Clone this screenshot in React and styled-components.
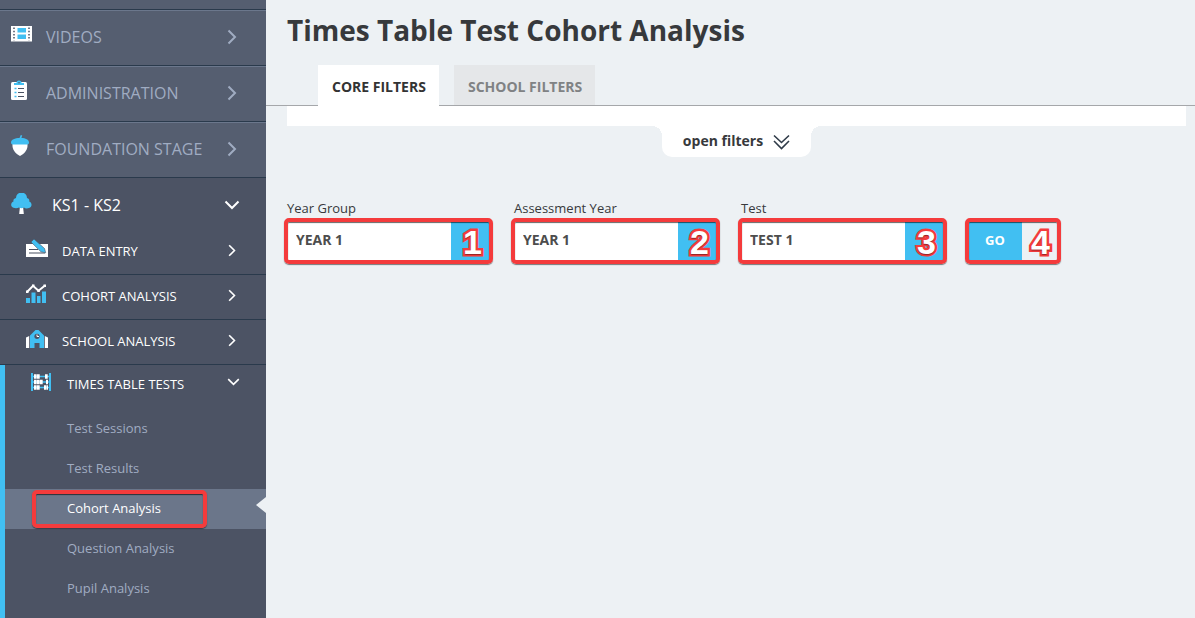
import React from 'react';
import styled, { createGlobalStyle, css } from 'styled-components';

const blue = '#41bff2';
const red = '#f43b3c';

const App = () => {
  return (
    <Page>
      <GlobalStyle />
      <Sidebar aria-label='Main'>
        <TopEdge />
        <MainLink href='#videos'>
          <Icon><VideoIcon /></Icon>
          VIDEOS
          <Chevron />
        </MainLink>
        <MainLink href='#administration'>
          <Icon><ClipboardIcon /></Icon>
          ADMINISTRATION
          <Chevron />
        </MainLink>
        <MainLink href='#foundation'>
          <Icon><AcornIcon /></Icon>
          FOUNDATION STAGE
          <Chevron />
        </MainLink>

        <Section>
          <SectionLink href='#ks'>
            <Icon><TreeIcon /></Icon>
            KS1 - KS2
            <Chevron open />
          </SectionLink>
          <SubLink href='#data-entry'>
            <Icon><DataEntryIcon /></Icon>
            DATA ENTRY
            <Chevron small />
          </SubLink>
          <SubLink href='#cohort'>
            <Icon><ChartIcon /></Icon>
            COHORT ANALYSIS
            <Chevron small />
          </SubLink>
          <SubLink href='#school'>
            <Icon><SchoolIcon /></Icon>
            SCHOOL ANALYSIS
            <Chevron small />
          </SubLink>
          <OpenGroup>
            <SubLink href='#times-table' $last>
              <Icon><AbacusIcon /></Icon>
              TIMES TABLE TESTS
              <Chevron open small />
            </SubLink>
            <PageLink href='#sessions'>Test Sessions</PageLink>
            <PageLink href='#results'>Test Results</PageLink>
            <PageLink href='#cohort-analysis' $active aria-current='page'>
              Cohort Analysis
              <LinkMark />
            </PageLink>
            <PageLink href='#question-analysis'>Question Analysis</PageLink>
            <PageLink href='#pupil-analysis'>Pupil Analysis</PageLink>
          </OpenGroup>
        </Section>
      </Sidebar>

      <Main>
        <Title>Times Table Test Cohort Analysis</Title>
        <Tabs role='tablist'>
          <Tab role='tab' aria-selected='true' $active>CORE FILTERS</Tab>
          <Tab role='tab' aria-selected='false'>SCHOOL FILTERS</Tab>
        </Tabs>
        <FilterPanel>
          <OpenFilters>
            open filters
            <svg width='17' height='16' viewBox='0 0 17 16' fill='none' stroke='#2f3b48' strokeWidth='1.600'>
              <path d='M1 1.500l7.500 7 7.500-7M1 7l7.500 7.500L16 7' />
            </svg>
          </OpenFilters>
        </FilterPanel>

        <Form onSubmit={(e) => e.preventDefault()}>
          <Field>
            <Label htmlFor='year-group'>Year Group</Label>
            <SelectBox>
              <Select id='year-group'>
                <option>YEAR 1</option>
              </Select>
              <SelectEnd />
              <Mark>1</Mark>
            </SelectBox>
          </Field>
          <Field>
            <Label htmlFor='assessment-year'>Assessment Year</Label>
            <SelectBox>
              <Select id='assessment-year'>
                <option>YEAR 1</option>
              </Select>
              <SelectEnd />
              <Mark>2</Mark>
            </SelectBox>
          </Field>
          <Field>
            <Label htmlFor='test'>Test</Label>
            <SelectBox>
              <Select id='test'>
                <option>TEST 1</option>
              </Select>
              <SelectEnd />
              <Mark>3</Mark>
            </SelectBox>
          </Field>
          <GoBox>
            <GoButton type='submit'>GO</GoButton>
            <Mark>4</Mark>
          </GoBox>
        </Form>
      </Main>
    </Page>
  );
};

// Icons
const Chevron = ({ open, small }) => {
  if (open) {
    return (
      <ChevronSvg width={small ? 13 : 16} height='10' viewBox='0 0 16 10' $lift={small}>
        <path d='M1.500 1.500L8 8l6.500-6.500' />
      </ChevronSvg>
    );
  }
  return (
    <ChevronSvg width='10' height={small ? 13 : 16} viewBox='0 0 10 16'>
      <path d='M1.500 1.500L8 8l-6.500 6.500' />
    </ChevronSvg>
  );
};

const VideoIcon = () => (
  <svg width='22' height='16' viewBox='0 0 22 16'>
    <path fill='#fff' d='M0 0h21v15.500H0z' />
    <path fill={blue} d='M6.500 2H15v4.500H6.500zM6.500 8.500H15V13H6.500z' />
    <path stroke='#4a5263' strokeWidth='1.500' strokeDasharray='1.500 1.700' d='M3 1.500v13M18 1.500v13' />
  </svg>
);

const ClipboardIcon = () => (
  <svg width='17' height='20' viewBox='0 0 17 20'>
    <rect y='2' width='16' height='18' rx='1.500' fill='#fff' />
    <path fill={blue} d='M3 5V3h2.500a2.500 2.500 0 015 0H13v2z' />
    <circle cx='8' cy='2.700' r='.8' fill='#555e70' />
    <path stroke={blue} strokeWidth='1.500' d='M3.500 8.500h2M3.500 12.500h2M3.500 16.500h2' />
    <path stroke='#4a5263' strokeWidth='1.200' d='M7 8.500h6M7 12.500h6M7 16.500h6' />
  </svg>
);

const AcornIcon = () => (
  <svg width='18' height='21' viewBox='0 0 18 21'>
    <path fill='#fff' d='M1.500 9h15c.5 6-3 9.500-7.500 12C4.500 18.500 1 15 1.500 9z' />
    <path fill={blue} d='M8.500 3L9.800 0l1.400.6L10.400 3c4 0 7.600 1.500 7.600 4.500C18 9 17 9.500 16 9.500H2C1 9.500 0 9 0 7.500 0 4.500 4 3 8.500 3z' />
  </svg>
);

const TreeIcon = () => (
  <svg width='21' height='21' viewBox='0 0 21 21'>
    <path fill='#fff' d='M9 13h3l.8 8H8.200z' />
    <path fill={blue} d='M5 5a5.500 5.500 0 0111 0c2 .5 2.700 2 2.200 3.500 3 1 3.300 5.500-.2 6.500-2 .8-4 .5-5-.5-1.500 1-3.500 1-5 0-1.500 1-4 1-5.500.3C-.8 13.500-.4 9.500 2.500 8.500 2 7 3 5.500 5 5z' />
  </svg>
);

const DataEntryIcon = () => (
  <svg width='22' height='19' viewBox='0 0 22 19'>
    <path fill='#fff' d='M0 5h22v13H0z' />
    <path stroke='#4a5263' strokeWidth='1.200' d='M3 10.500h9M3 14h16' />
    <path fill={blue} stroke='#4a5263' strokeWidth='.6' d='M5 3l3-3 10.500 9.500 1.200 4.300-4.700-1z' />
  </svg>
);

const ChartIcon = () => (
  <svg width='20' height='19' viewBox='0 0 20 19'>
    <path fill={blue} d='M0 14h4v5H0zM5.500 8.500h4V19h-4zM11 12h3.500v7H11zM16 7.500h4V19h-4z' />
    <path fill='none' stroke='#fff' strokeWidth='2' d='M1 8L7 1.800l5.500 5L19 1.500' />
    <path fill='#fff' d='M0 6.500h2.500v2.500H0zM6 .5h2.500v2.500H6zM11.300 5.500h2.500V8h-2.500zM17.500.5H20V3h-2.500z' />
  </svg>
);

const SchoolIcon = () => (
  <svg width='22' height='18' viewBox='0 0 22 18'>
    <path fill='#fff' d='M0 7.500L3.200 6v12H0zM18.800 6L22 7.500V18h-3.200z' />
    <path fill={blue} d='M4 18V5.500L9.500 0h3L18 5.500V18h-4.500v-5h-5v5z' />
    <circle cx='11' cy='6.300' r='2.600' fill='#4c5364' />
    <path fill='none' stroke='#fff' d='M11 4.500v2h2' />
  </svg>
);

const AbacusIcon = () => (
  <svg width='20' height='18' viewBox='0 0 20 18'>
    <path stroke={blue} strokeWidth='1.400' d='M2 3.500h16M2 9h16M2 14.500h16' />
    <path fill={blue} d='M0 0h2v18H0zM18 0h2v18h-2z' />
    <path stroke='#fff' strokeWidth='4.500' strokeDasharray='2.700 .3' d='M3 3.500h6M14 3.500h3M3 9h9M15 9h2M3 14.500h6M13 14.500h4' />
  </svg>
);

// Styled components
const GlobalStyle = createGlobalStyle`
  * {
    box-sizing: border-box;
  }
  body {
    margin: 0;
    background: #edf1f4;
    font-family: 'Open Sans', 'Noto Sans', sans-serif;
    color: #37393c;
  }
`;

const Page = styled.div`
  display: flex;
  min-height: 100vh;
`;

const Sidebar = styled.nav`
  display: flex;
  flex-direction: column;
  flex: 0 0 266px;
  background: #555e70;
`;

const TopEdge = styled.div`
  height: 9px;
`;

const rowLink = css`
  display: flex;
  align-items: center;
  padding-right: 28px;
  text-decoration: none;
`;

const Icon = styled.span`
  display: flex;
  width: 36px;
  padding-bottom: 4px;
`;

const MainLink = styled.a`
  ${rowLink}
  height: 56px;
  padding-left: 11px;
  padding-bottom: 2px;
  border-top: 1px solid #2a3a4c;
  box-shadow: inset 0 1px #6b778c;
  font-size: 16px;
  color: #a0acc2;
  ${Icon} {
    width: 35px;
    padding-bottom: 6px;
  }
`;

const ChevronSvg = styled.svg`
  margin-left: auto;
  margin-right: ${(props) => (props.height === '10' ? '-2px' : '1px')};
  margin-bottom: ${(props) => (props.$lift ? '4px' : '0')};
  fill: none;
  stroke: currentColor;
  stroke-width: 2;
`;

const Section = styled.div`
  flex: 1;
  display: flex;
  flex-direction: column;
  background: #4c5364;
  border-top: 1px solid #2a3a4c;
`;

const SectionLink = styled.a`
  ${rowLink}
  height: 52px;
  padding-left: 11px;
  padding-top: 2px;
  font-size: 16px;
  color: #fff;
  ${Icon} {
    width: 41px;
  }
`;

const SubLink = styled.a`
  ${rowLink}
  height: ${(props) => (props.$last ? '44px' : '45px')};
  padding-left: 26px;
  padding-bottom: ${(props) => (props.$last ? '6px' : '3px')};
  border-bottom: ${(props) => (props.$last ? 'none' : '1px solid #2a3a4c')};
  font-size: 13px;
  color: #fff;
`;

const OpenGroup = styled.div`
  flex: 1;
  border-left: 5px solid ${blue};
`;

const PageLink = styled.a`
  position: relative;
  display: flex;
  align-items: center;
  height: 40px;
  padding-left: 62px;
  padding-bottom: 2px;
  font-size: 13px;
  text-decoration: none;
  color: ${(props) => (props.$active ? '#fff' : '#a0acc2')};
  background: ${(props) => (props.$active ? '#6b768a' : 'none')};
  &::after {
    content: '';
    display: ${(props) => (props.$active ? 'block' : 'none')};
    margin-left: auto;
    border: solid transparent;
    border-width: 8px 10px 8px 0;
    border-right-color: #edf1f4;
    margin-bottom: 6px;
  }
`;

const Main = styled.main`
  flex: 1;
  min-width: 0;
`;

const Title = styled.h1`
  margin: 0;
  padding: 10px 21px 15px;
  font-size: 28px;
  line-height: 40px;
  font-weight: 700;
`;

const Tabs = styled.div`
  display: flex;
  gap: 15px;
  padding-left: 52px;
  border-bottom: 1px solid #a5a7aa;
`;

const Tab = styled.button`
  height: ${(props) => (props.$active ? '41px' : '40px')};
  margin-bottom: ${(props) => (props.$active ? '-1px' : '0')};
  padding: 2px 13px 0 14px;
  border: none;
  background: ${(props) => (props.$active ? '#fff' : '#e5e7e9')};
  color: ${(props) => (props.$active ? '#333' : '#808284')};
  font: 700 14px 'Open Sans', sans-serif;
`;

const FilterPanel = styled.div`
  display: flex;
  justify-content: center;
  height: 20px;
  margin: 0 9px 0 21px;
  padding-top: 20px;
  background: #fff;
`;

const OpenFilters = styled.button`
  display: flex;
  flex-shrink: 0;
  align-items: center;
  gap: 10px;
  height: 31px;
  padding: 0 21px 2px;
  border: none;
  border-radius: 0 0 10px 10px;
  background: #fff;
  color: #37393c;
  font: 700 14px 'Open Sans', sans-serif;
  svg {
    margin-top: 2px;
  }
  /* curved shoulders either side of the tab */
  &::before,
  &::after {
    content: '';
    width: 10px;
    height: 10px;
    align-self: flex-start;
    background: radial-gradient(circle at 0 100%, transparent 10px, #fff 10px);
  }
  &::before {
    margin-left: -31px;
    margin-right: 11px;
  }
  &::after {
    margin-right: -31px;
    margin-left: 11px;
    background: radial-gradient(circle at 100% 100%, transparent 10px, #fff 10px);
  }
`;

const Form = styled.form`
  display: flex;
  flex-wrap: wrap;
  align-items: flex-end;
  gap: 24px;
  padding: 72px 21px 0;
`;

const Field = styled.div`
  width: 203px;
`;

const Label = styled.label`
  display: block;
  margin-bottom: 3px;
  font-size: 13px;
  line-height: 20px;
`;

const SelectBox = styled.div`
  position: relative;
  display: flex;
  height: 40px;
`;

const Select = styled.select`
  flex: 1;
  min-width: 0;
  padding: 0 9px 3px;
  appearance: none;
  border: none;
  border-radius: 0;
  background: #fff;
  color: #4d4d4d;
  font: 700 14px 'Open Sans', sans-serif;
`;

const SelectEnd = styled.span`
  width: 39px;
  background: ${blue};
`;

const GoBox = styled.div`
  position: relative;
  width: 90px;
  height: 40px;
`;

const GoButton = styled.button`
  width: 54px;
  height: 40px;
  padding: 0 0 2px;
  border: none;
  background: ${blue};
  color: #fff;
  font: 700 13px 'Open Sans', sans-serif;
`;

const Mark = styled.span`
  position: absolute;
  inset: -3px;
  padding-right: 7px;
  border: 4px solid ${red};
  border-radius: 5px;
  box-shadow: 0 1px 1px rgba(0, 0, 0, 0.5), inset 0 1px 1px rgba(0, 0, 0, 0.6);
  pointer-events: none;
  text-align: right;
  font: 700 34px/40px 'Liberation Sans', sans-serif;
  color: #fff;
  -webkit-text-stroke: 5px ${red};
  paint-order: stroke fill;
  text-shadow: 0 1px 1px rgba(0, 0, 0, 0.4);
`;

const LinkMark = styled(Mark)`
  inset: 1px 59px 1px 27px;
`;

export default App;
